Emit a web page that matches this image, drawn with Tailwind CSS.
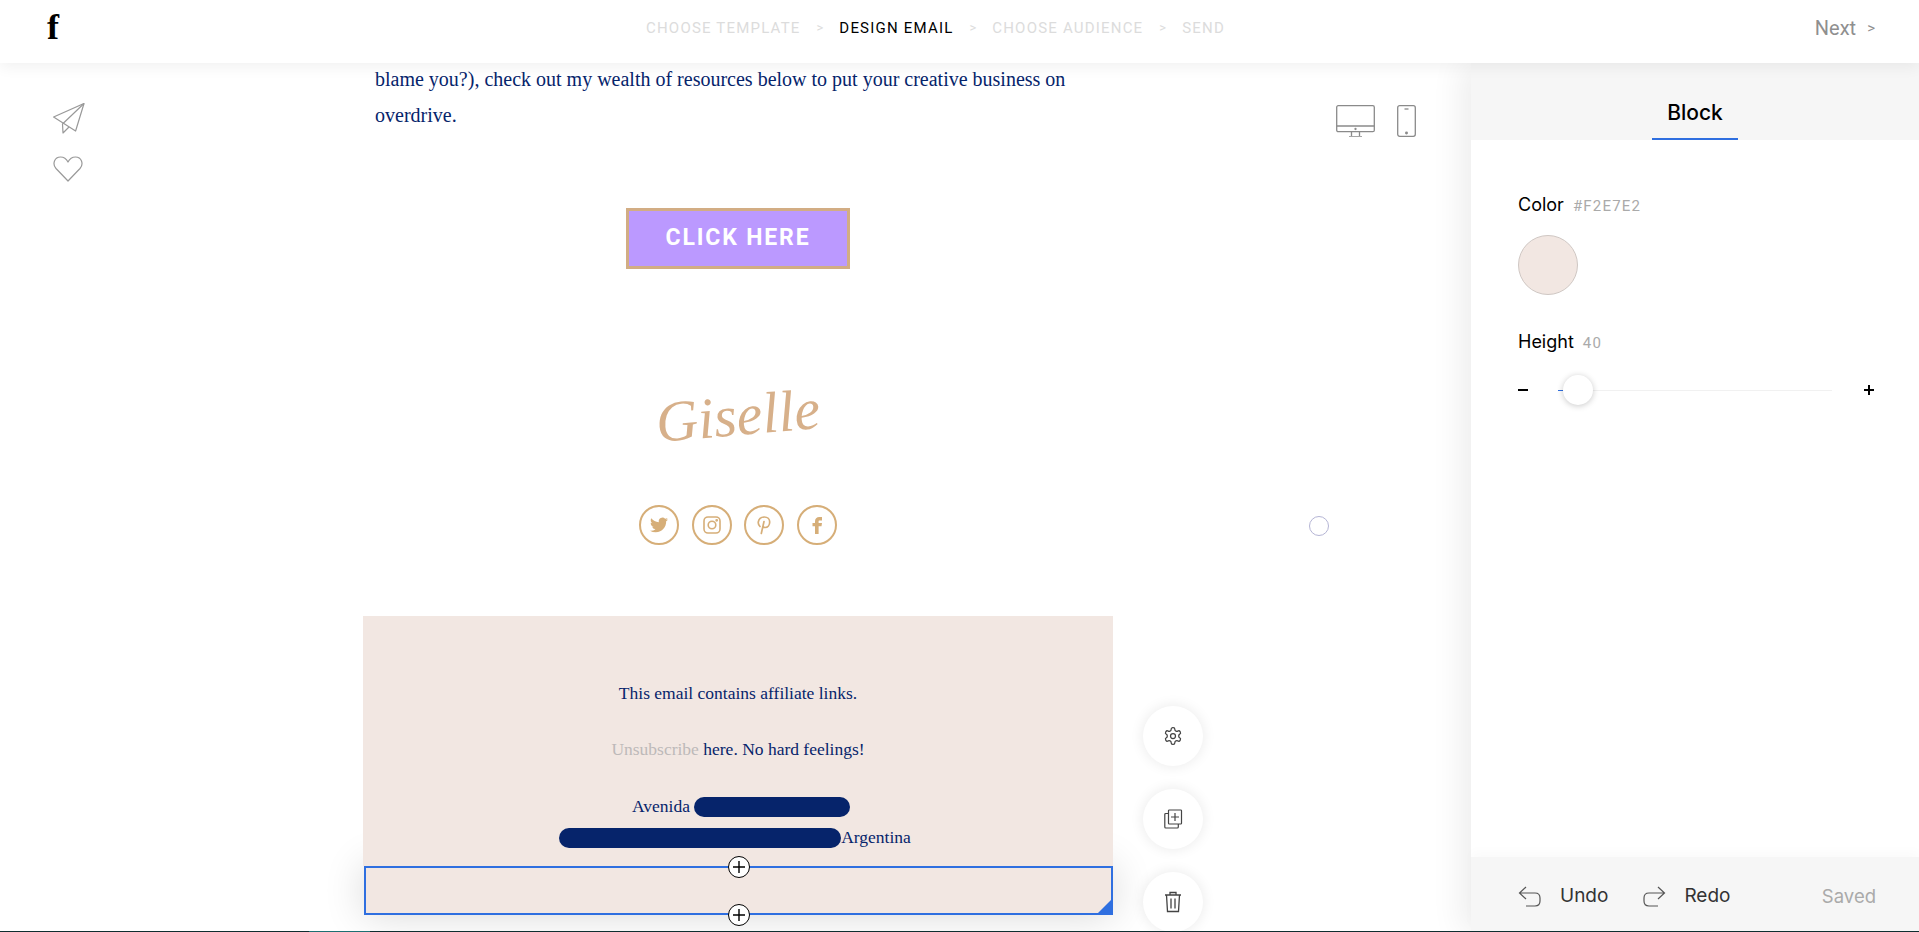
<!DOCTYPE html>
<html lang="en">
<head>
  <meta charset="UTF-8">
  <title>Design Email</title>
  <script src="https://cdn.jsdelivr.net/npm/@tailwindcss/browser@4"></script>
</head>
<body class="bg-white font-['Roboto',sans-serif] overflow-hidden">
<div class="h-[932px] w-[1919px] flex flex-col overflow-hidden relative">

  <!-- top bar -->
  <header class="h-[63px] shrink-0 relative z-30 bg-white shadow-[0_4px_14px_rgba(0,0,0,0.06)] flex items-center">
    <div class="w-[646px] shrink-0 pl-[47px] pb-[8px]">
      <span class="font-['Liberation_Serif',serif] font-bold text-[36px] leading-none text-black">f</span>
    </div>
    <nav class="flex items-center pb-[7px] text-[15px] tracking-[0.08em] text-[#dcdcdc] whitespace-nowrap">
      <span>CHOOSE TEMPLATE</span>
      <span class="mx-[16px] text-[13px] tracking-normal">&gt;</span>
      <span class="text-black">DESIGN EMAIL</span>
      <span class="mx-[16px] text-[13px] tracking-normal">&gt;</span>
      <span>CHOOSE AUDIENCE</span>
      <span class="mx-[16px] text-[13px] tracking-normal">&gt;</span>
      <span>SEND</span>
    </nav>
    <div class="ml-auto pr-[44px] pb-[7px] flex items-center gap-[11px] text-[#8f8f8f] text-[20px]">
      <span>Next</span><span class="text-[15px]">&gt;</span>
    </div>
  </header>

  <div class="flex-1 flex min-h-0">
    <!-- left rail -->
    <aside class="w-[363px] shrink-0 pl-[53px] pt-[40px] flex flex-col gap-[22px]">
      <svg class="w-[32px] h-[31px]" viewBox="0 0 32 31" fill="none" stroke="#999" stroke-width="1.2" stroke-linejoin="round">
        <path d="M31 .5.6 14l22 14z"/><path d="M31 .5 9.500 21l.5 9 6-6"/>
      </svg>
      <svg class="w-[30px] h-[26px]" viewBox="0 0 30 26" fill="none" stroke="#999" stroke-width="1.2" stroke-linejoin="round">
        <path d="M15 25 3 12.500C-1 8 1.500 1 7.500 1 11 1 13.500 3 15 6c1.500-3 4-5 7.500-5 6 0 8.500 7 4.500 11.500z"/>
      </svg>
    </aside>

    <!-- email canvas -->
    <main class="w-[750px] shrink-0 flex flex-col">
      <div class="-mt-[2px] pl-[12px] pr-[40px] font-['Liberation_Serif',serif] text-[#06246b] text-[20px] leading-[36px]">
        <p>blame you?), check out my wealth of resources below to put your creative business on overdrive.</p>
      </div>

      <a class="self-center mt-[75px] w-[224px] h-[61px] border-[3px] border-[#d2ad84] bg-[#bb99ff] text-white font-bold text-[23px] tracking-[0.08em] flex items-center justify-center">CLICK HERE</a>

      <div class="mt-[114px] h-[66px] flex items-center justify-center text-[#d7b08a] font-['Liberation_Serif',serif] italic text-[58px] leading-none -rotate-[5deg]">Giselle</div>

      <div class="mt-[56px] flex justify-center gap-[12.67px] text-[#d6ae78]">
        <span class="w-[40px] h-[40px] rounded-full border-2 border-[#d6ae78] flex items-center justify-center">
          <svg class="w-[18px] h-[18px]" viewBox="0 0 24 24" fill="currentColor"><path d="M23.953 4.57a10 10 0 01-2.825.775 4.958 4.958 0 002.163-2.723c-.951.555-2.005.959-3.127 1.184a4.92 4.92 0 00-8.384 4.482C7.69 8.095 4.067 6.13 1.64 3.162a4.822 4.822 0 00-.666 2.475c0 1.71.87 3.213 2.188 4.096a4.904 4.904 0 01-2.228-.616v.06a4.923 4.923 0 003.946 4.827 4.996 4.996 0 01-2.212.085 4.936 4.936 0 004.604 3.417 9.867 9.867 0 01-6.102 2.105c-.39 0-.779-.023-1.17-.067a13.995 13.995 0 007.557 2.209c9.053 0 13.998-7.496 13.998-13.985 0-.21 0-.42-.015-.63A9.935 9.935 0 0024 4.59z"/></svg>
        </span>
        <span class="w-[40px] h-[40px] rounded-full border-2 border-[#d6ae78] flex items-center justify-center">
          <svg class="w-[18px] h-[18px]" viewBox="0 0 18 18" fill="none" stroke="currentColor" stroke-width="1.6"><rect x="1" y="1" width="16" height="16" rx="4"/><circle cx="9" cy="9" r="3.800"/><circle cx="13.700" cy="4.300" r=".6" fill="currentColor"/></svg>
        </span>
        <span class="w-[40px] h-[40px] rounded-full border-2 border-[#d6ae78] flex items-center justify-center">
          <svg class="w-[16px] h-[20px]" viewBox="0 0 16 20" fill="none" stroke="currentColor" stroke-width="1.7" stroke-linecap="round"><path d="M4 11.500C2.500 10 2 8.800 2.300 7 2.800 4 5.300 2 8.300 2c3.200 0 5.400 2.200 5.400 5 0 3.200-2 5.500-4.500 5.500-1.300 0-2.200-.8-2.200-1.800M8 6.500 5.300 18.500"/></svg>
        </span>
        <span class="w-[40px] h-[40px] rounded-full border-2 border-[#d6ae78] flex items-center justify-center">
          <svg class="w-[14px] h-[20px]" viewBox="2 0 14 20" fill="currentColor"><path d="M11.500 5.500h2.500V2h-2.700C8.700 2 7 3.700 7 6.200V8H4.500v3.300H7V19h3.600v-7.700h2.900l.5-3.300h-3.400V6.400c0-.6.200-.9.900-.9z"/></svg>
        </span>
      </div>

      <!-- footer block -->
      <div class="mt-[71px] relative z-10 h-[250px] bg-[#f2e7e2] font-['Liberation_Serif',serif] text-[#06246b] text-[17.5px] text-center">
        <p class="pt-[65px] leading-[24px]">This email contains affiliate links.</p>
        <p class="mt-[32px] leading-[24px]"><span class="text-[#bdb9b9]">Unsubscribe</span> here. No hard feelings!</p>
        <div class="mt-[30px] h-[31px] flex items-center justify-center gap-[4px] pl-[6px]">
          <span>Avenida</span><span class="w-[156px] h-[20px] rounded-[10px] bg-[#06246b]"></span>
        </div>
        <div class="h-[31px] flex items-center justify-center pr-[6px]">
          <span class="w-[282px] h-[20px] rounded-[10px] bg-[#06246b]"></span><span>Argentina</span>
        </div>
      </div>

      <!-- selected spacer block -->
      <div class="relative h-[49px] bg-[#f2e7e2] border-2 border-[#2f6fe0] ml-[1px] shadow-[0_0_40px_rgba(0,0,0,0.16)]">
        <span class="absolute z-20 left-1/2 -translate-x-1/2 -top-[12px] w-[22px] h-[22px] rounded-full bg-white border-[1.5px] border-black flex items-center justify-center">
          <svg class="w-[14px] h-[14px]" viewBox="0 0 14 14" stroke="#000" stroke-width="1.400"><path d="M7 1v12M1 7h12"/></svg>
        </span>
        <span class="absolute z-20 left-1/2 -translate-x-1/2 -bottom-[13px] w-[22px] h-[22px] rounded-full bg-white border-[1.5px] border-black flex items-center justify-center">
          <svg class="w-[14px] h-[14px]" viewBox="0 0 14 14" stroke="#000" stroke-width="1.400"><path d="M7 1v12M1 7h12"/></svg>
        </span>
        <svg class="absolute -right-[2px] -bottom-[2px] w-[17px] h-[17px]" viewBox="0 0 17 17" fill="#2f6fe0"><path d="M17 0v17H0z"/></svg>
      </div>
    </main>

    <!-- view switches and block tools -->
    <section class="w-[358px] shrink-0 flex flex-col relative z-10">
      <div class="pt-[42px] pr-[55px] flex justify-end gap-[22px]">
        <svg class="w-[39px] h-[32px]" viewBox="0 0 39 32" fill="none" stroke="#8a8a8a" stroke-width="1.300"><rect x=".7" y=".7" width="37.600" height="26" rx="1.500"/><path d="M.7 21h37.600M13 32h13M15.500 27v4M23.500 27v4"/><circle cx="19.500" cy="24" r=".5" fill="#8a8a8a"/></svg>
        <svg class="w-[19px] h-[32px]" viewBox="0 0 19 32" fill="none" stroke="#8a8a8a" stroke-width="1.300"><rect x=".7" y=".7" width="17.600" height="30.600" rx="2"/><path d="M7.500 4h4"/><circle cx="9.500" cy="28" r=".8" fill="#8a8a8a"/></svg>
      </div>
      <span class="mt-[379px] ml-[196px] w-[20px] h-[20px] rounded-full border-[1.5px] border-[#b5b5d5]"></span>
      <div class="mt-[170px] ml-[30px] flex flex-col gap-[23px]">
        <button class="w-[60px] h-[60px] rounded-full bg-white shadow-[0_0_14px_rgba(0,0,0,0.09)] flex items-center justify-center">
          <svg class="w-[20px] h-[20px]" viewBox="0 0 24 24" fill="none" stroke="#444" stroke-width="1.500" stroke-linejoin="round"><path d="M12.220 2h-.44a2 2 0 0 0-2 2v.18a2 2 0 0 1-1 1.730l-.43.250a2 2 0 0 1-2 0l-.15-.080a2 2 0 0 0-2.730.730l-.22.380a2 2 0 0 0 .730 2.730l.150.100a2 2 0 0 1 1 1.720v.510a2 2 0 0 1-1 1.740l-.150.090a2 2 0 0 0-.730 2.730l.220.380a2 2 0 0 0 2.730.730l.150-.080a2 2 0 0 1 2 0l.430.250a2 2 0 0 1 1 1.730V20a2 2 0 0 0 2 2h.44a2 2 0 0 0 2-2v-.18a2 2 0 0 1 1-1.730l.43-.250a2 2 0 0 1 2 0l.15.080a2 2 0 0 0 2.730-.730l.22-.390a2 2 0 0 0-.730-2.730l-.150-.080a2 2 0 0 1-1-1.740v-.500a2 2 0 0 1 1-1.740l.150-.090a2 2 0 0 0 .730-2.730l-.220-.380a2 2 0 0 0-2.730-.730l-.150.080a2 2 0 0 1-2 0l-.430-.250a2 2 0 0 1-1-1.730V4a2 2 0 0 0-2-2z"/><circle cx="12" cy="12" r="3"/></svg>
        </button>
        <button class="w-[60px] h-[60px] rounded-full bg-white shadow-[0_0_14px_rgba(0,0,0,0.09)] flex items-center justify-center">
          <svg class="w-[20px] h-[20px]" viewBox="0 0 20 20" fill="none" stroke="#444" stroke-width="1.200"><rect x="5.500" y="1" width="13" height="14" rx=".8"/><path d="M5.500 4.500H2.800c-.6 0-1 .4-1 1V18c0 .6.4 1 1 1h11.500c.6 0 1-.4 1-1v-3M12 4v8M8 8h8"/></svg>
        </button>
        <button class="w-[60px] h-[60px] rounded-full bg-white shadow-[0_0_14px_rgba(0,0,0,0.09)] flex items-center justify-center">
          <svg class="w-[20px] h-[22px]" viewBox="0 0 20 22" fill="none" stroke="#444" stroke-width="1.300"><path d="M2 4h16M7 4V1.500h6V4M3.500 4l1 16.500h11l1-16.500M8 7.500v10M12 7.500v10"/></svg>
        </button>
      </div>
    </section>

    <!-- right panel -->
    <aside class="w-[448px] shrink-0 relative z-20 bg-white shadow-[-10px_0_30px_rgba(0,0,0,0.07)] flex flex-col font-['Inter',sans-serif]">
      <div class="h-[77px] bg-[#f6f6f6] flex justify-center">
        <div class="w-[86px] h-[77px] pt-[24px] border-b-2 border-[#2f6fe0] flex items-center justify-center text-[21px] font-medium text-black">Block</div>
      </div>
      <div class="pl-[47px] pr-[45px] flex-1">
        <div class="mt-[52px] flex items-baseline gap-[9px] leading-[26px]">
          <span class="text-[18px] text-black">Color</span>
          <span class="text-[15px] tracking-[0.08em] text-[#aaaaaa] font-['Roboto',sans-serif]">#F2E7E2</span>
        </div>
        <div class="mt-[16px] w-[60px] h-[60px] rounded-full bg-[#f2e7e2] border border-[#cfc7c3]"></div>
        <div class="mt-[34px] flex items-baseline gap-[9px] leading-[26px]">
          <span class="text-[18px] text-black">Height</span>
          <span class="text-[15px] tracking-[0.08em] text-[#aaaaaa] font-['Roboto',sans-serif]">40</span>
        </div>
        <div class="mt-[19px] h-[30px] flex items-center">
          <span class="w-[10px] h-[2px] bg-black"></span>
          <div class="relative ml-[30px] w-[274px] h-[1px] bg-[#f1f1f1]">
            <span class="absolute left-0 top-0 w-[6px] h-[1px] bg-[#2f6fe0]"></span>
            <span class="absolute left-[5px] -top-[15px] w-[30px] h-[30px] rounded-full bg-white shadow-[0_1px_6px_rgba(0,0,0,0.22)]"></span>
          </div>
          <span class="ml-auto relative w-[10px] h-[10px]">
            <span class="absolute left-0 top-[4px] w-[10px] h-[2px] bg-black"></span>
            <span class="absolute left-[4px] top-0 w-[2px] h-[10px] bg-black"></span>
          </span>
        </div>
      </div>
      <div class="h-[75px] bg-[#f6f6f6] shadow-[0_-6px_10px_rgba(0,0,0,0.02)] flex items-center pt-[4px] pl-[47px] pr-[43px] text-[19px] text-[#333]">
        <svg class="w-[24px] h-[22px]" viewBox="0 0 24 22" fill="none" stroke="#555" stroke-width="1.200"><path d="M8 1 1.500 7 8 13M1.500 7H17c3 0 5 2 5 5v3c0 3-2 5-5 5H8"/></svg>
        <span class="ml-[18px]">Undo</span>
        <svg class="ml-[34px] w-[24px] h-[22px]" viewBox="0 0 24 22" fill="none" stroke="#555" stroke-width="1.200"><path d="m16 1 6.500 6L16 13M22.500 7H7c-3 0-5 2-5 5v3c0 3 2 5 5 5h9"/></svg>
        <span class="ml-[18px]">Redo</span>
        <span class="ml-auto text-[#aaaaaa] text-[18.5px]">Saved</span>
      </div>
    </aside>
  </div>

  <!-- strip of the window behind, at the very bottom -->
  <div class="absolute z-40 left-0 right-0 bottom-0 h-[1px] bg-[#0f2d30]"><div class="ml-[309px] w-[61px] h-[1px] bg-[#1d6f72]"></div></div>
</div>
</body>
</html>
